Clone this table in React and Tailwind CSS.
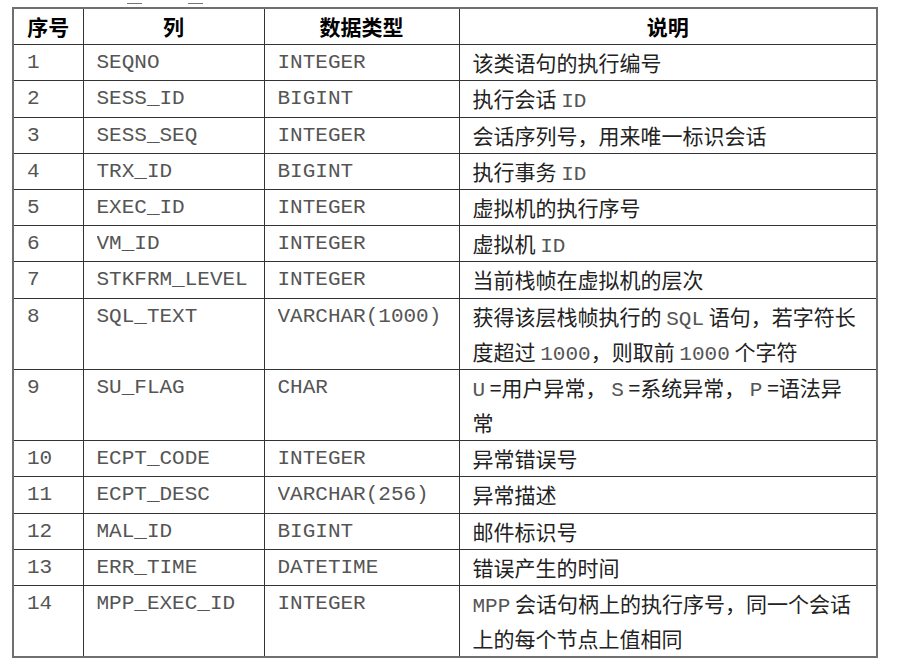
import React from 'react';

const zh = { fontFamily: '"Noto Sans CJK SC", "Noto Sans", sans-serif' };
const mono = { fontFamily: '"Liberation Mono", "DejaVu Sans Mono", monospace' };

// inline mono fragment inside Chinese text; leading-none keeps the line box from growing
const M = ({ children }) => <span style={mono} className="text-[21px] leading-none text-[#555]">{children}</span>;

const rows = [
    ['1', 'SEQNO', 'INTEGER', [<>该类语句的执行编号</>]],
    ['2', 'SESS_ID', 'BIGINT', [<>执行会话 <M>ID</M></>]],
    ['3', 'SESS_SEQ', 'INTEGER', [<>会话序列号，用来唯一标识会话</>]],
    ['4', 'TRX_ID', 'BIGINT', [<>执行事务 <M>ID</M></>]],
    ['5', 'EXEC_ID', 'INTEGER', [<>虚拟机的执行序号</>]],
    ['6', 'VM_ID', 'INTEGER', [<>虚拟机 <M>ID</M></>]],
    ['7', 'STKFRM_LEVEL', 'INTEGER', [<>当前栈帧在虚拟机的层次</>]],
    ['8', 'SQL_TEXT', 'VARCHAR(1000)', [<>获得该层栈帧执行的 <M>SQL</M> 语句，若字符长</>, <>度超过 <M>1000</M>，则取前 <M>1000</M> 个字符</>]],
    ['9', 'SU_FLAG', 'CHAR', [<><M>U</M> =用户异常， <M>S</M> =系统异常， <M>P</M> =语法异</>, <>常</>]],
    ['10', 'ECPT_CODE', 'INTEGER', [<>异常错误号</>]],
    ['11', 'ECPT_DESC', 'VARCHAR(256)', [<>异常描述</>]],
    ['12', 'MAL_ID', 'BIGINT', [<>邮件标识号</>]],
    ['13', 'ERR_TIME', 'DATETIME', [<>错误产生的时间</>]],
    ['14', 'MPP_EXEC_ID', 'INTEGER', [<><M>MPP</M> 会话句柄上的执行序号，同一个会话</>, <>上的每个节点上值相同</>]],
];

function Cell({ lines, font, size, color, n }) {
    return (
        <td style={font} className={`border border-[#333] align-top p-0 px-[13px] ${color}`}>
            {Array.from({ length: n }).map((_, i) => (
                <div key={i} className={`h-[35.2px] leading-[35.2px] whitespace-nowrap overflow-hidden ${size}`}>
                    {lines[i] || ''}
                </div>
            ))}
        </td>
    );
}

export default function App() {
    return (
        <div className="w-[901px] h-[670px] bg-white overflow-hidden">
            {/* cut-off underscores from the row above */}
            <div className="relative h-[7px]">
                <div className="absolute left-[127px] top-[3px] w-[15px] h-[1px] bg-[#777]"></div>
                <div className="absolute left-[188px] top-[3px] w-[15px] h-[1px] bg-[#777]"></div>
            </div>
            <table className="ml-[12px] border-collapse border-2 border-[#6f6f6f] table-fixed w-[864px]">
                <colgroup>
                    <col className="w-[70px]" />
                    <col className="w-[181px]" />
                    <col className="w-[195px]" />
                    <col className="w-[418px]" />
                </colgroup>
                <thead>
                    <tr>
                        {['序号', '列', '数据类型', '说明'].map((h, i) => (
                            <th
                                key={i}
                                style={zh}
                                className="border border-[#333] text-center font-bold text-[21px] p-0 text-black"
                            >
                                <div className="h-[35.2px] leading-[35.2px]">{h}</div>
                            </th>
                        ))}
                    </tr>
                </thead>
                <tbody>
                    {rows.map((r) => {
                        const n = r[3].length;
                        return (
                            <tr key={r[0]}>
                                <Cell lines={[r[0]]} n={n} font={mono} size="text-[21px]" color="text-[#555]" />
                                <Cell lines={[r[1]]} n={n} font={mono} size="text-[21px]" color="text-[#555]" />
                                <Cell lines={[r[2]]} n={n} font={mono} size="text-[21px]" color="text-[#555]" />
                                <Cell lines={r[3]} n={n} font={zh} size="text-[21px]" color="text-[#222]" />
                            </tr>
                        );
                    })}
                </tbody>
            </table>
        </div>
    );
}
